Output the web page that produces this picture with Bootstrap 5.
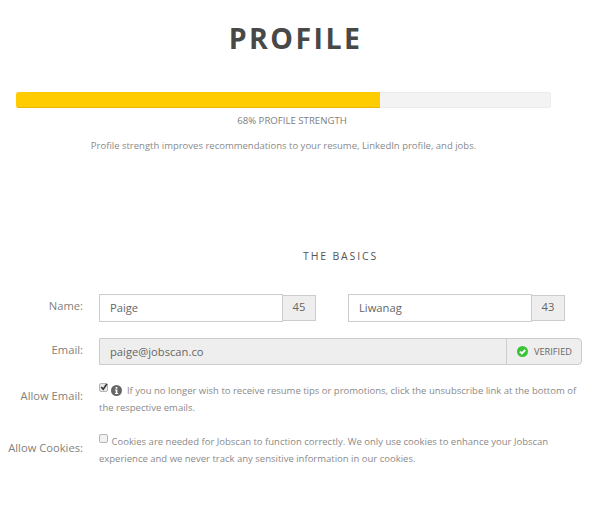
<!DOCTYPE html>
<html lang="en">
<head>
<meta charset="utf-8">
<title>Profile</title>
<link href="https://cdn.jsdelivr.net/npm/bootstrap@5.3.0/dist/css/bootstrap.min.css" rel="stylesheet">
<style>
html,body{height:524px;overflow:hidden}
body{font-family:"Open Sans",sans-serif;color:#8a8a8a;background:#fff;font-size:11px;width:599px}
.pg-title{font-size:28.5px;font-weight:700;letter-spacing:2.45px;color:#484848;text-align:center;line-height:40px;margin:0;padding:18px 0 0 0;width:591px}
.meter{width:535px;height:16px;margin:34px 0 0 16px;background:#f3f3f3;box-shadow:inset 0 0 0 1px #ececec;border-radius:3px;overflow:hidden}
.meter .progress-bar{background:#fc0;border-bottom:1px solid #e6b800}
.meter-lbl{width:552px;margin:6px 0 0 16px;text-align:center;font-size:9.65px;line-height:14px;color:#808080}
.meter-note{width:535px;margin:11px 0 0 16px;text-align:center;font-size:9.5px;line-height:14px;color:#8a8a8a}
.sect{font-size:10.5px;letter-spacing:1.85px;color:#555;line-height:14px;margin:96px 0 0 303px}
.frow{display:flex}
.flbl{width:83px;flex:none;text-align:right;font-size:11.2px;color:#85817a}
.ffield{margin-left:16px}
.row-name{margin-top:31px}
.row-name .flbl{line-height:24px}
.grp{width:217px;flex-wrap:nowrap;height:28px}
.grp .form-control{height:28px;min-height:0;border:1px solid #ccc;border-radius:0;padding:0 10px 2px;font-size:11.2px;color:#666;font-family:inherit;box-shadow:none}
.grp .input-group-text{width:34px;justify-content:center;height:26px;margin:1px 0 0 -1px;background:#eee;border:1px solid #ccc;border-radius:0;padding:0 0 2px;font-size:11.2px;color:#666;z-index:3}
.grp-2{margin-left:32px}
.row-mail{margin-top:16px}
.row-mail .flbl{line-height:24px}
.mailbox{width:483px;height:27px;background:#eee;border:1px solid #ccc;border-radius:0 4px 4px 0}
.mailbox .addr{flex:1;font-size:11.2px;color:#666;padding-left:10px;line-height:25px}
.mailbox .stat{width:75px;border-left:1px solid #ccc;font-size:9.2px;color:#666;padding-left:10px;gap:6px;line-height:12px}
.row-c1{margin-top:17px}
.row-c2{margin-top:17px}
.row-c1 .flbl{line-height:16px;padding-top:6px}
.row-c2 .flbl{line-height:16px;padding-top:7px}
.note{width:482px;font-size:9.5px;line-height:17px;color:#8a8a8a}
.note .tick{appearance:none;display:inline-block;width:9px;height:9px;margin:0 1px 0 0;vertical-align:2px;border:1px solid #b5b5b5;border-radius:2px;background:#f2f2f2}
.note .tick:checked{background:#e8e8e8}
.tick-wrap{position:relative;display:inline-block;line-height:1}
.tick-mark{position:absolute;left:1px;top:0;width:8px;height:8px}
.ico-i{width:11px;height:11px;vertical-align:-2px;margin:0 2px 0 0}
</style>
</head>
<body>
<h1 class="pg-title">PROFILE</h1>
<div class="progress meter">
  <div class="progress-bar" role="progressbar" style="width:68%" aria-valuenow="68" aria-valuemin="0" aria-valuemax="100"></div>
</div>
<div class="meter-lbl">68% PROFILE STRENGTH</div>
<div class="meter-note">Profile strength improves recommendations to your resume, LinkedIn profile, and jobs.</div>
<div class="sect">THE BASICS</div>
<div class="frow row-name">
  <div class="flbl">Name:</div>
  <div class="ffield d-flex">
    <div class="input-group grp">
      <input class="form-control" type="text" value="Paige" aria-label="First name">
      <span class="input-group-text">45</span>
    </div>
    <div class="input-group grp grp-2">
      <input class="form-control" type="text" value="Liwanag" aria-label="Last name">
      <span class="input-group-text">43</span>
    </div>
  </div>
</div>
<div class="frow row-mail">
  <div class="flbl">Email:</div>
  <div class="ffield mailbox d-flex">
    <div class="addr">paige@jobscan.co</div>
    <div class="stat d-flex align-items-center">
      <svg width="11" height="11" viewBox="0 0 11 11" aria-hidden="true"><circle cx="5.5" cy="5.5" r="5.5" fill="#3ac43a"/><path d="M2.9 5.6l1.9 1.9 3.4-3.5" fill="none" stroke="#fff" stroke-width="1.8"/></svg>
      <span>VERIFIED</span>
    </div>
  </div>
</div>
<div class="frow row-c1">
  <div class="flbl">Allow Email:</div>
  <div class="ffield note">
    <span class="tick-wrap"><input class="tick" type="checkbox" checked aria-label="Allow email"><svg class="tick-mark" viewBox="0 0 8 8" aria-hidden="true"><path d="M1.2 4l2 2.2L6.8 1" fill="none" stroke="#333" stroke-width="1.6"/></svg></span>
    <svg class="ico-i" viewBox="0 0 11 11" aria-hidden="true"><circle cx="5.5" cy="5.5" r="5.5" fill="#666"/><rect x="4.6" y="2" width="1.8" height="1.7" fill="#fff"/><path d="M3.9 4.6h2.5v3.3h.8v1H3.9v-1h.8V5.6h-.8z" fill="#fff"/></svg>
    If you no longer wish to receive resume tips or promotions, click the unsubscribe link at the bottom of the respective emails.
  </div>
</div>
<div class="frow row-c2">
  <div class="flbl">Allow Cookies:</div>
  <div class="ffield note">
    <input class="tick" type="checkbox" aria-label="Allow cookies">
    Cookies are needed for Jobscan to function correctly. We only use cookies to enhance your Jobscan experience and we never track any sensitive information in our cookies.
  </div>
</div>
<script src="https://cdn.jsdelivr.net/npm/bootstrap@5.3.0/dist/js/bootstrap.bundle.min.js"></script>
</body>
</html>
